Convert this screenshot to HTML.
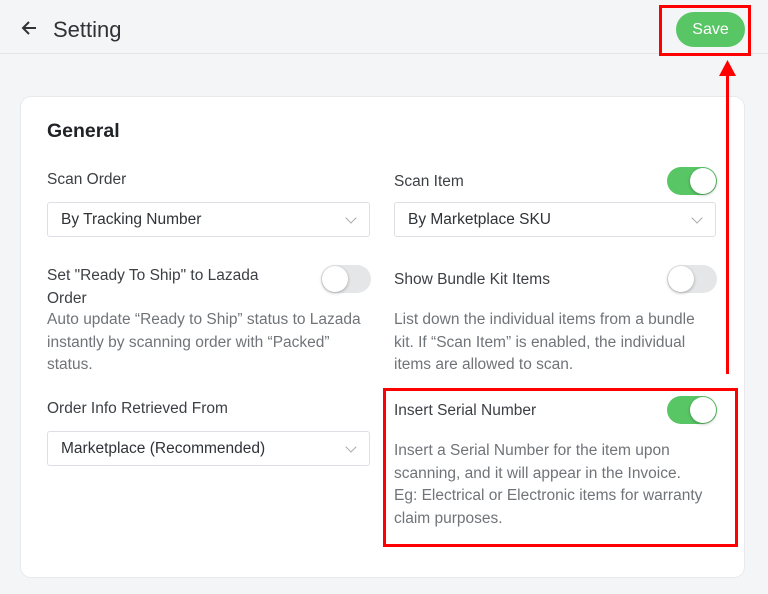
<!DOCTYPE html><html><head><style>
*{box-sizing:border-box;margin:0;padding:0}
body{width:768px;height:594px;background:#f4f5f7;font-family:"Liberation Sans",sans-serif;position:relative;overflow:hidden;color:#333}
.a{position:absolute}
.t{font-size:15.5px;color:#3c3f44}
.d{font-size:15.5px;color:#707478;line-height:22.5px}
.sel{position:absolute;height:35px;border:1px solid #dcdfe4;border-radius:3px;background:#fff;font-size:15.5px;color:#2f3236;padding:8px 13px}
.sel:after{content:"";position:absolute;right:14px;top:11px;width:7px;height:7px;border-right:1px solid #aaa;border-bottom:1px solid #aaa;transform:rotate(45deg)}
.tg{position:absolute;width:50px;height:28px;border-radius:14px;background:#e5e6e8}
.tg:after{content:"";position:absolute;left:1px;top:1px;width:26px;height:26px;border-radius:50%;background:#fff;box-shadow:0 1px 3px rgba(0,0,0,.3)}
.tg.on{background:#59c665}
.tg.on:after{left:23px}
</style></head><body>
<div class="a" style="left:0;top:53px;width:768px;height:1px;background:#e2e4e8"></div>
<svg class="a" style="left:20px;top:19px" width="18" height="18" viewBox="0 0 18 18"><path d="M16 9H3M9 3L3 9l6 6" fill="none" stroke="#333" stroke-width="2"/></svg>
<div class="a" style="left:53px;top:17px;font-size:22px;color:#2f3236">Setting</div>
<div class="a" style="left:676px;top:12px;width:69px;height:35px;border-radius:18px;background:#59c665;color:#fff;font-size:16px;text-align:center;line-height:35px">Save</div>
<div class="a" style="left:659px;top:5px;width:92px;height:51px;border:3px solid #f00"></div>
<div class="a" style="left:20px;top:96px;width:725px;height:482px;background:#fff;border-radius:11px;border:1px solid #e8e9ec"></div>
<div class="a" style="left:47px;top:120px;font-size:19.5px;font-weight:bold;color:#1f2226">General</div>
<div class="a t" style="left:47px;top:171px">Scan Order</div>
<div class="a t" style="left:394px;top:173px">Scan Item</div>
<div class="tg on" style="left:667px;top:167px"></div>
<div class="sel" style="left:47px;top:202px;width:323px">By Tracking Number</div>
<div class="sel" style="left:394px;top:202px;width:322px">By Marketplace SKU</div>
<div class="a t" style="left:47px;top:264px;line-height:23px">Set "Ready To Ship" to Lazada<br>Order</div>
<div class="tg" style="left:321px;top:265px"></div>
<div class="a d" style="left:47px;top:309px">Auto update “Ready to Ship” status to Lazada<br>instantly by scanning order with “Packed”<br>status.</div>
<div class="a t" style="left:394px;top:271px">Show Bundle Kit Items</div>
<div class="tg" style="left:667px;top:265px"></div>
<div class="a d" style="left:394px;top:309px">List down the individual items from a bundle<br>kit. If “Scan Item” is enabled, the individual<br>items are allowed to scan.</div>
<div class="a t" style="left:47px;top:400px">Order Info Retrieved From</div>
<div class="sel" style="left:47px;top:431px;width:323px">Marketplace (Recommended)</div>
<div class="a t" style="left:394px;top:402px">Insert Serial Number</div>
<div class="tg on" style="left:667px;top:396px"></div>
<div class="a d" style="left:394px;top:440px">Insert a Serial Number for the item upon<br>scanning, and it will appear in the Invoice.<br>Eg: Electrical or Electronic items for warranty<br>claim purposes.</div>
<div class="a" style="left:383px;top:388px;width:355px;height:159px;border:3px solid #f00"></div>
<div class="a" style="left:726px;top:72px;width:3px;height:302px;background:#f00"></div>
<svg class="a" style="left:719px;top:60px" width="17" height="16"><path d="M8.5 0L17 16H0z" fill="#f00"/></svg>
</body></html>
